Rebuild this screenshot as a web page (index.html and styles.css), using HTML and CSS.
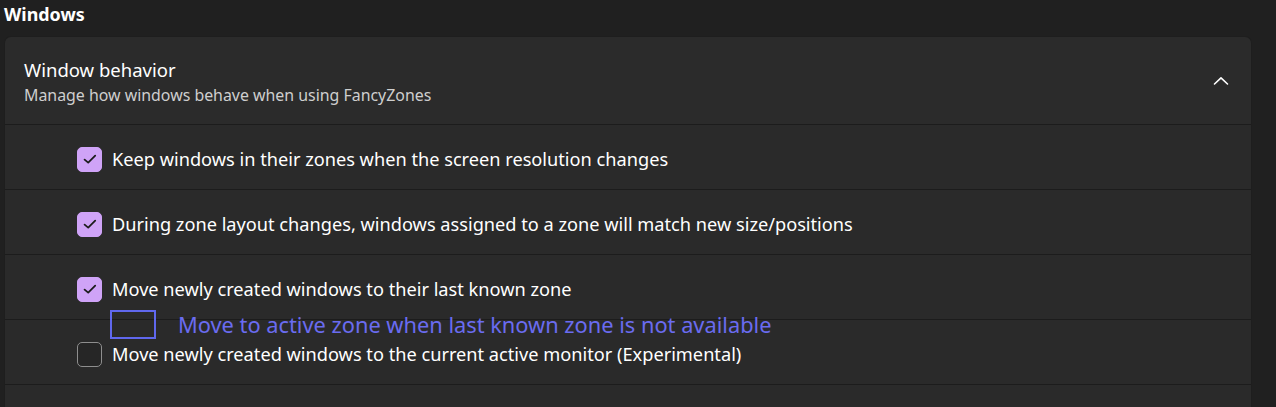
FILE: index.html
```html
<!DOCTYPE html>
<html>
<head>
<meta charset="utf-8">
<link rel="stylesheet" href="styles.css">
</head>
<body>
<div class="page">
  <h2 class="section-title">Windows</h2>
  <div class="card">
    <div class="card-header">
      <div class="header-text">
        <div class="header-title">Window behavior</div>
        <div class="header-sub">Manage how windows behave when using FancyZones</div>
      </div>
      <svg class="chevron" width="16" height="10" viewBox="0 0 16 10"><path d="M1.5 8 L8 1.8 L14.5 8" fill="none" stroke="#ffffff" stroke-width="1.6" stroke-linecap="round" stroke-linejoin="round"/></svg>
    </div>
    <div class="row">
      <span class="cb checked"><svg width="16" height="16" viewBox="0 0 16 16"><path d="M2.6 8.6 L6.2 11.6 L13.2 4.6" fill="none" stroke="#1c1c1c" stroke-width="1.8" stroke-linecap="round" stroke-linejoin="round"/></svg></span>
      <span class="label">Keep windows in their zones when the screen resolution changes</span>
    </div>
    <div class="row">
      <span class="cb checked"><svg width="16" height="16" viewBox="0 0 16 16"><path d="M2.6 8.6 L6.2 11.6 L13.2 4.6" fill="none" stroke="#1c1c1c" stroke-width="1.8" stroke-linecap="round" stroke-linejoin="round"/></svg></span>
      <span class="label">During zone layout changes, windows assigned to a zone will match new size/positions</span>
    </div>
    <div class="row">
      <span class="cb checked"><svg width="16" height="16" viewBox="0 0 16 16"><path d="M2.6 8.6 L6.2 11.6 L13.2 4.6" fill="none" stroke="#1c1c1c" stroke-width="1.8" stroke-linecap="round" stroke-linejoin="round"/></svg></span>
      <span class="label">Move newly created windows to their last known zone</span>
    </div>
    <div class="row">
      <span class="cb"></span>
      <span class="label">Move newly created windows to the current active monitor (Experimental)</span>
    </div>
    <div class="row last"></div>
    <div class="overlay">
      <span class="overlay-box"></span>
      <span class="overlay-text">Move to active zone when last known zone is not available</span>
    </div>
  </div>
</div>
</body>
</html>
```
FILE: styles.css
```css
html, body {
  margin: 0;
  padding: 0;
  background: #202020;
  overflow: hidden;
}
body {
  font-family: "Noto Sans", "Open Sans", sans-serif;
  color: #ffffff;
  width: 1276px;
  height: 407px;
}
.page {
  padding: 0 0 0 4px;
}
.section-title {
  margin: 0;
  height: 36px;
  box-sizing: border-box;
  padding-top: 2px;
  font-size: 17.9px;
  font-weight: 700;
  line-height: 24px;
  color: #ffffff;
}
.card {
  position: relative;
  width: 1248px;
  background: #2b2b2b;
  border-radius: 7px 7px 0 0;
  border: 1px solid #1e1e1e;
  border-bottom: none;
  box-sizing: border-box;
}
.card-header {
  height: 87px;
  display: flex;
  align-items: center;
  justify-content: space-between;
  padding: 0 22px 0 19px;
  box-sizing: border-box;
}
.header-text {
  display: flex;
  flex-direction: column;
  gap: 2px;
  padding-top: 2px;
}
.header-title {
  font-size: 18.5px;
  line-height: 24px;
  color: #ffffff;
}
.header-sub {
  font-size: 15.9px;
  line-height: 22px;
  color: #cfcfcf;
}
.row {
  height: 65px;
  box-sizing: border-box;
  border-top: 1px solid #1c1c1c;
  display: flex;
  align-items: center;
  padding: 4px 0 0 72px;
  background: #2a2a2a;
}
.cb {
  width: 25px;
  height: 25px;
  box-sizing: border-box;
  border-radius: 5px;
  border: 1px solid #8e8e8e;
  background: #262626;
  display: flex;
  align-items: center;
  justify-content: center;
  flex: none;
}
.cb.checked {
  background: #cfa3f7;
  border-color: #cfa3f7;
}
.label {
  margin-left: 10px;
  font-size: 18.2px;
  line-height: 22px;
  color: #ffffff;
}
.overlay {
  position: absolute;
  left: 105px;
  top: 273px;
  display: flex;
  align-items: center;
}
.overlay-box {
  width: 46px;
  height: 29px;
  box-sizing: border-box;
  border: 2px solid #6068ee;
}
.overlay-text {
  margin-left: 22px;
  font-size: 21.8px;
  line-height: 26px;
  color: #6a6cf0;
}
```
